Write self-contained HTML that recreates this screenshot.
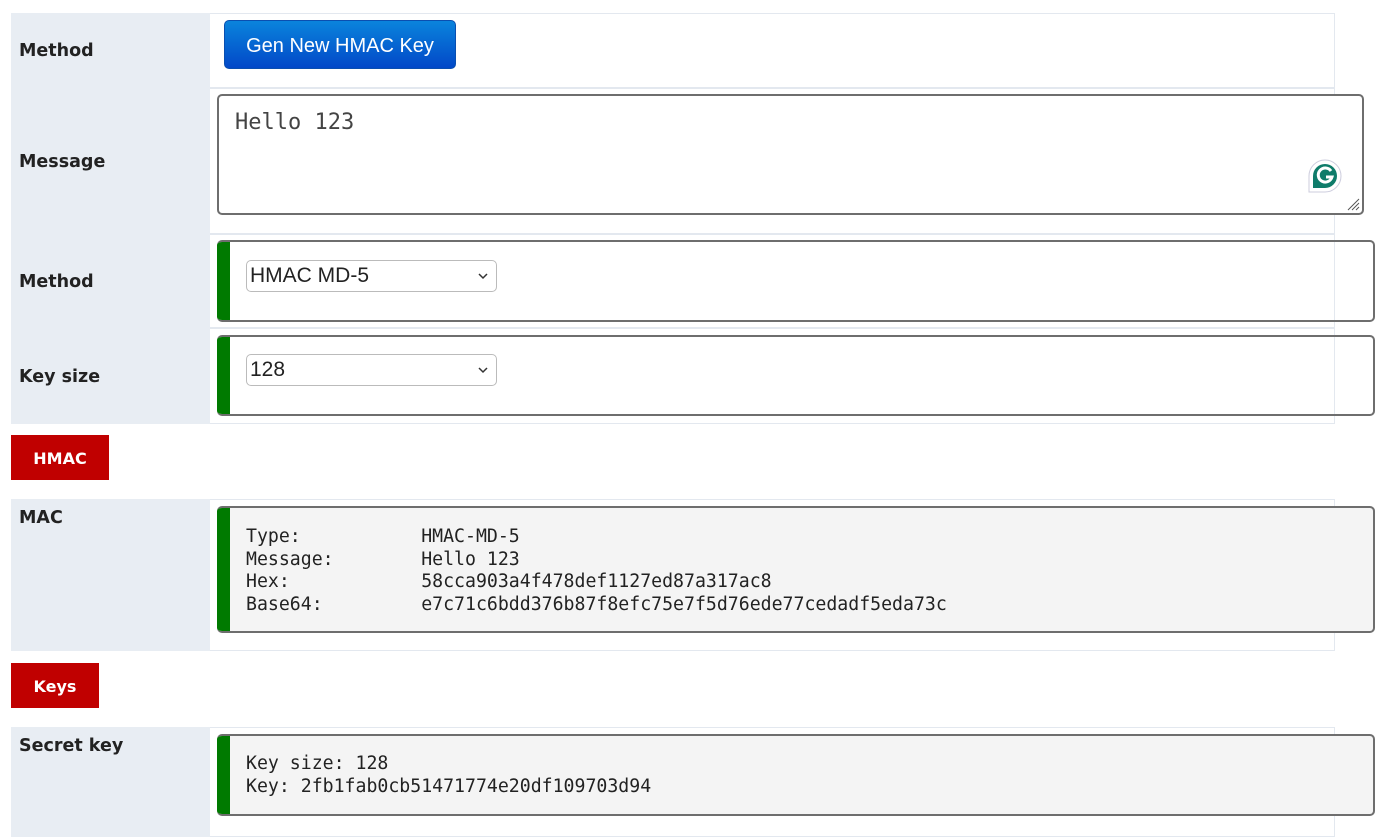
<!DOCTYPE html>
<html><head><meta charset="utf-8"><style>
*{box-sizing:border-box}
body{margin:0;background:#fff;font-family:"DejaVu Sans","Liberation Sans",sans-serif;width:1400px;height:831px;overflow:hidden;position:relative}
.abs{position:absolute}
.lab{position:absolute;left:11px;width:199px;background:#e8edf3;font-weight:bold;font-size:17.5px;color:#222;padding-left:8px}
.cell{position:absolute;left:210px;width:1125px;border:1px solid #e3e8ef;border-left:none}
.panel{position:absolute;left:217px;width:1158px;border:2px solid #6e6e6e;border-left:none;border-radius:5px;overflow:hidden}
.panel:before{content:"";position:absolute;left:0;top:-2px;bottom:-2px;width:13px;background:#007a00}
.sel{position:absolute;left:246px;width:251px;height:32px;border:1px solid #bbb;border-radius:5px;font-family:"Liberation Sans",sans-serif;font-size:21px;padding:3px 3px;color:#222;background:#fff}
.sel svg{position:absolute;right:8px;top:12px}
.mono{font-family:"DejaVu Sans Mono","Liberation Mono",monospace;font-size:18.2px;color:#222;line-height:22.5px;white-space:pre}
.red{position:absolute;left:11px;background:#c00000;color:#fff;font-weight:bold;font-size:16px;text-align:center}
</style></head><body>
<div class="cell" style="top:13px;height:75px"></div>
<div class="cell" style="top:88px;height:146px"></div>
<div class="cell" style="top:234px;height:94px"></div>
<div class="cell" style="top:328px;height:96px"></div>
<div class="lab" style="top:13px;height:75px;line-height:77px">Method</div>
<div class="lab" style="top:88px;height:146px;line-height:148px">Message</div>
<div class="lab" style="top:234px;height:94px;line-height:96px">Method</div>
<div class="lab" style="top:328px;height:96px;line-height:98px">Key size</div>

<div class="abs" style="left:224px;top:20px;width:232px;height:49px;border-radius:5px;background:linear-gradient(#0a84dc,#0248c8);border:1px solid #0a4fb0;color:#fff;font-family:'Liberation Sans',sans-serif;font-size:20px;text-align:center;line-height:50px">Gen New HMAC Key</div>

<div class="abs" style="left:217px;top:94px;width:1147px;height:121px;border:2px solid #6e6e6e;border-radius:5px;background:#fff">
<div class="mono" style="position:absolute;left:16px;top:16px;font-size:22px;color:#444">Hello 123</div>
<svg style="position:absolute;right:20px;bottom:20px" width="34" height="34" viewBox="0 0 34 34"><path d="M17 1a16 16 0 1 1 0 32H1V17A16 16 0 0 1 17 1z" fill="#fff" stroke="#ccd" stroke-width="1"/><path d="M17 5a12 12 0 1 1 0 24H5V17A12 12 0 0 1 17 5z" fill="#0f7c6a"/><path d="M23 12a7 7 0 1 0 1 6h-6" fill="none" stroke="#fff" stroke-width="3"/></svg>
<svg style="position:absolute;right:2px;bottom:2px" width="14" height="14"><path d="M13 2L2 13M13 6L6 13M13 10L10 13" stroke="#555" stroke-width="1"/></svg>
</div>

<div class="panel" style="top:240px;height:82px"></div>
<div class="sel" style="top:260px">HMAC MD-5<svg width="10" height="7"><path d="M1 1l4 4 4-4" fill="none" stroke="#333" stroke-width="1.5"/></svg></div>
<div class="panel" style="top:335px;height:81px"></div>
<div class="sel" style="top:354px">128<svg width="10" height="7"><path d="M1 1l4 4 4-4" fill="none" stroke="#333" stroke-width="1.5"/></svg></div>

<div class="red" style="top:435px;width:98px;height:45px;line-height:47px">HMAC</div>

<div class="cell" style="top:499px;height:152px"></div>
<div class="lab" style="top:499px;height:152px;padding-top:9px">MAC</div>
<div class="panel" style="top:506px;height:127px;background:#f4f4f4"></div>
<div class="mono abs" style="left:246px;top:526px">Type:           HMAC-MD-5
Message:        Hello 123
Hex:            58cca903a4f478def1127ed87a317ac8
Base64:         e7c71c6bdd376b87f8efc75e7f5d76ede77cedadf5eda73c</div>

<div class="red" style="top:663px;width:88px;height:45px;line-height:47px">Keys</div>

<div class="cell" style="top:727px;height:110px"></div>
<div class="lab" style="top:727px;height:110px;padding-top:9px">Secret key</div>
<div class="panel" style="top:734px;height:82px;background:#f4f4f4"></div>
<div class="mono abs" style="left:246px;top:753px">Key size: 128
Key: 2fb1fab0cb51471774e20df109703d94</div>
</body></html>
